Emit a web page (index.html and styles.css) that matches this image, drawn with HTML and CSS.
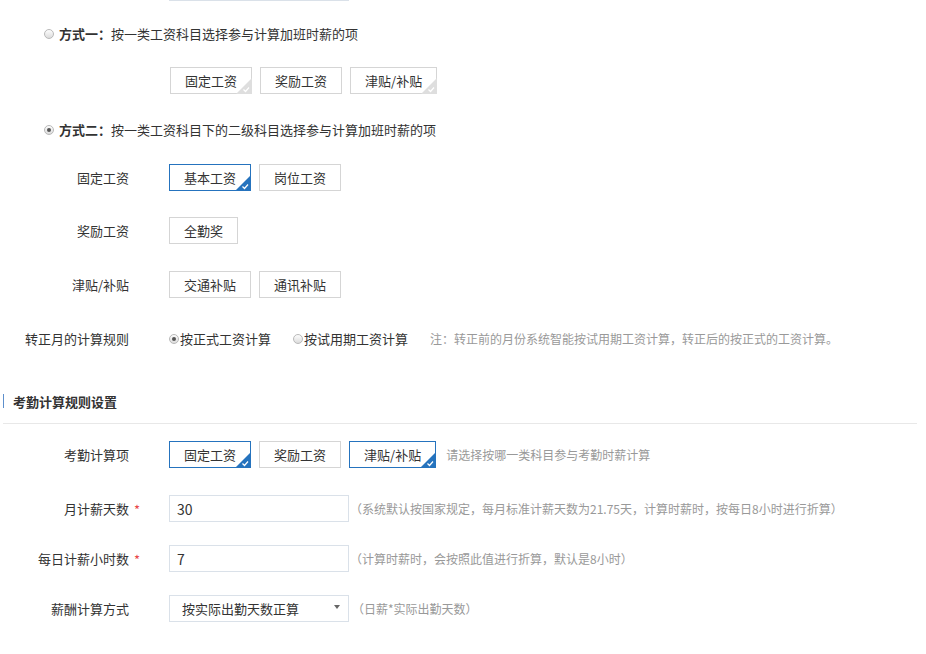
FILE: index.html
```html
<!DOCTYPE html>
<html lang="zh-CN">
<head>
<meta charset="utf-8">
<title>薪资规则设置</title>
<link rel="stylesheet" href="styles.css">
</head>
<body>
<div class="page">
  <div class="prev-input"></div>

  <div class="method"><span class="radio"></span><b>方式一：</b>按一类工资科目选择参与计算加班时薪的项</div>
  <div class="chips chips-m1">
    <span class="chip dis">固定工资<svg class="corner" width="16" height="16" viewBox="0 0 16 16"><path d="M16 0V16H0Z" fill="#dedede"/><path d="M7.5 11.5l2 2 3.5-4" stroke="#fff" stroke-width="1.2" fill="none"/></svg></span>
    <span class="chip">奖励工资</span>
    <span class="chip dis">津贴/补贴<svg class="corner" width="16" height="16" viewBox="0 0 16 16"><path d="M16 0V16H0Z" fill="#dedede"/><path d="M7.5 11.5l2 2 3.5-4" stroke="#fff" stroke-width="1.2" fill="none"/></svg></span>
  </div>

  <div class="method m2"><span class="radio on"></span><b>方式二：</b>按一类工资科目下的二级科目选择参与计算加班时薪的项</div>

  <div class="form-row r-fixed">
    <div class="label">固定工资</div>
    <div class="chips">
      <span class="chip on">基本工资<svg class="corner" width="16" height="16" viewBox="0 0 16 16"><path d="M16 0V16H0Z" fill="#2573be"/><path d="M7.5 11.5l2 2 3.5-4" stroke="#fff" stroke-width="1.2" fill="none"/></svg></span>
      <span class="chip">岗位工资</span>
    </div>
  </div>
  <div class="form-row r-bonus">
    <div class="label">奖励工资</div>
    <div class="chips"><span class="chip">全勤奖</span></div>
  </div>
  <div class="form-row r-allow">
    <div class="label">津贴/补贴</div>
    <div class="chips">
      <span class="chip">交通补贴</span>
      <span class="chip">通讯补贴</span>
    </div>
  </div>
  <div class="form-row r-rule">
    <div class="label">转正月的计算规则</div>
    <div class="radio-opt"><span class="radio on"></span>按正式工资计算</div>
    <div class="radio-opt second"><span class="radio"></span>按试用期工资计算</div>
    <div class="note">注：转正前的月份系统智能按试用期工资计算，转正后的按正式的工资计算。</div>
  </div>

  <div class="section-title"><h3>考勤计算规则设置</h3></div>

  <div class="form-row r-att">
    <div class="label">考勤计算项</div>
    <div class="chips">
      <span class="chip on">固定工资<svg class="corner" width="16" height="16" viewBox="0 0 16 16"><path d="M16 0V16H0Z" fill="#2573be"/><path d="M7.5 11.5l2 2 3.5-4" stroke="#fff" stroke-width="1.2" fill="none"/></svg></span>
      <span class="chip">奖励工资</span>
      <span class="chip on">津贴/补贴<svg class="corner" width="16" height="16" viewBox="0 0 16 16"><path d="M16 0V16H0Z" fill="#2573be"/><path d="M7.5 11.5l2 2 3.5-4" stroke="#fff" stroke-width="1.2" fill="none"/></svg></span>
    </div>
    <div class="hint h-att">请选择按哪一类科目参与考勤时薪计算</div>
  </div>
  <div class="form-row r-days">
    <div class="label"><span class="req">月计薪天数</span></div>
    <input class="input" type="text" value="30">
    <div class="hint">（系统默认按国家规定，每月标准计薪天数为21.75天，计算时薪时，按每日8小时进行折算）</div>
  </div>
  <div class="form-row r-hours">
    <div class="label"><span class="req">每日计薪小时数</span></div>
    <input class="input" type="text" value="7">
    <div class="hint">（计算时薪时，会按照此值进行折算，默认是8小时）</div>
  </div>
  <div class="form-row r-mode">
    <div class="label">薪酬计算方式</div>
    <div class="select"><span>按实际出勤天数正算</span><span class="arrow"></span></div>
    <div class="hint h-sel">（日薪*实际出勤天数）</div>
  </div>
</div>
</body>
</html>
```

FILE: styles.css
```css
html, body {
  margin: 0;
  padding: 0;
  background: #fff;
}
body {
  font-family: "Noto Sans CJK SC", "Microsoft YaHei", "Noto Sans", sans-serif;
  font-size: 13px;
  color: #333;
}
.page {
  width: 926px;
  overflow: hidden;
}
.prev-input {
  margin-left: 169px;
  width: 180px;
  height: 0;
  border-bottom: 1px solid #dae1e9;
  box-sizing: border-box;
}

.method {
  display: flex;
  align-items: center;
  height: 20px;
  line-height: 20px;
  padding-left: 44px;
  margin-top: 23px;
  white-space: nowrap;
}
.method b {
  font-weight: bold;
}
.method .radio {
  margin-right: 5px;
}
.method.m2 {
  margin-top: 26px;
}

.radio {
  display: inline-block;
  position: relative;
  flex: none;
  width: 10px;
  height: 10px;
  box-sizing: border-box;
  border-radius: 50%;
  border: 1px solid #b9b9b9;
  background: linear-gradient(#fdfdfd, #dcdcdc);
}
.radio.on::after {
  content: "";
  position: absolute;
  left: 2px;
  top: 2px;
  width: 4px;
  height: 4px;
  border-radius: 50%;
  background: #555;
}

.chips {
  display: flex;
  gap: 8px;
}
.chips-m1 {
  margin-left: 170px;
  margin-top: 23px;
}
.chip {
  position: relative;
  display: block;
  height: 27px;
  box-sizing: border-box;
  border: 1px solid #d5d5d5;
  padding: 0 14px;
  line-height: 25px;
  background: #fff;
  white-space: nowrap;
}
.chip.on {
  border-color: #2573be;
}
.chip .corner {
  position: absolute;
  right: -1px;
  bottom: -1px;
  display: block;
}

.form-row {
  display: flex;
  align-items: center;
  height: 27px;
  white-space: nowrap;
}
.form-row > .label {
  flex: none;
  width: 129px;
  margin-right: 40px;
  text-align: right;
}
.req {
  position: relative;
}
.req::after {
  content: "*";
  position: absolute;
  left: 100%;
  top: 1px;
  margin-left: 5px;
  color: #e8474a;
}
.r-fixed { margin-top: 24px; }
.r-bonus { margin-top: 26px; }
.r-allow { margin-top: 27px; }
.r-rule { margin-top: 27px; }

.radio-opt {
  display: flex;
  align-items: center;
}
.radio-opt .radio {
  margin-right: 1px;
}
.radio-opt.second {
  margin-left: 22px;
}
.note {
  margin-left: 22px;
  font-size: 12px;
  color: #999;
}

.section-title {
  margin: 39px 9px 0 3px;
  padding-bottom: 12px;
  border-bottom: 1px solid #e8e8e8;
}
.section-title h3 {
  display: flex;
  align-items: center;
  margin: 0;
  height: 20px;
  font-size: 13px;
  font-weight: bold;
  color: #333;
}
.section-title h3::before {
  content: "";
  width: 1px;
  height: 14px;
  background: #5d8fcc;
  margin-right: 9px;
}

.r-att { margin-top: 17px; }
.r-days { margin-top: 27px; }
.r-hours { margin-top: 23px; }
.r-mode { margin-top: 23px; }

.hint {
  margin-left: 1px;
  font-size: 12px;
  color: #999;
}
.h-att {
  margin-left: 10px;
}
.h-sel {
  margin-left: 3px;
}

.input {
  flex: none;
  width: 180px;
  height: 27px;
  box-sizing: border-box;
  border: 1px solid #dae1e9;
  padding: 0 7px;
  margin: 0;
  font-family: inherit;
  font-size: 14px;
  color: #333;
  outline: none;
}
.select {
  flex: none;
  display: flex;
  align-items: center;
  justify-content: space-between;
  width: 180px;
  height: 27px;
  box-sizing: border-box;
  border: 1px solid #dae1e9;
  padding: 0 8px 0 12px;
}
.select .arrow {
  width: 0;
  height: 0;
  border-left: 3px solid transparent;
  border-right: 3px solid transparent;
  border-top: 4px solid #666;
  margin-top: -3px;
}
```
